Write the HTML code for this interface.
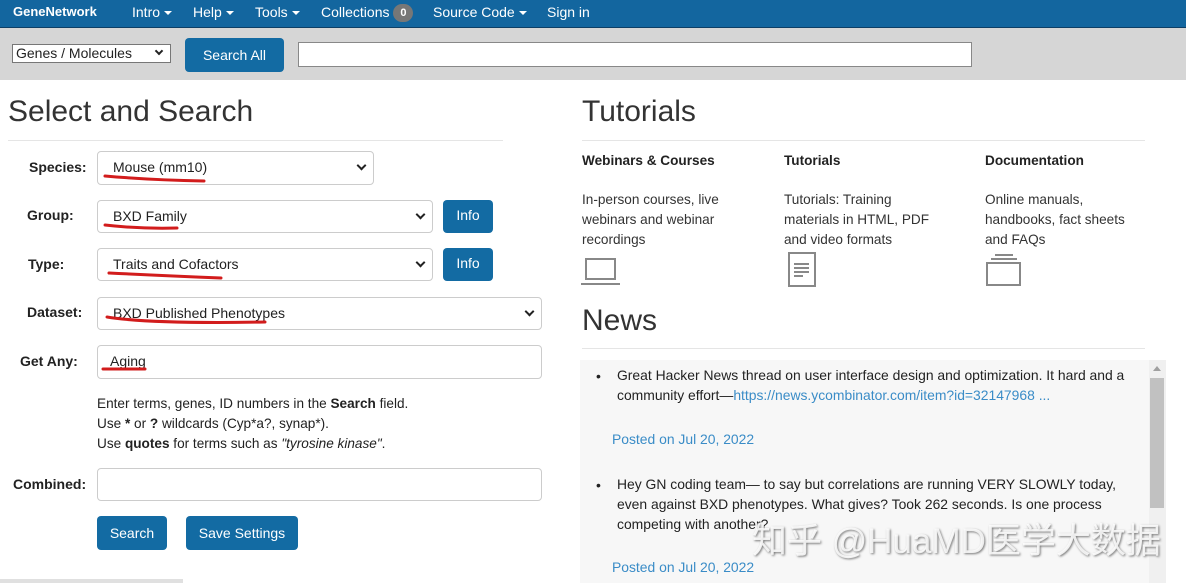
<!DOCTYPE html>
<html><head><meta charset="utf-8"><style>
*{box-sizing:border-box;margin:0;padding:0}
body{width:1186px;height:583px;overflow:hidden;background:#fff;font-family:"Liberation Sans",Arial,sans-serif;font-size:14px;color:#222;position:relative}
.a{position:absolute;white-space:nowrap}
#nav{position:absolute;left:0;top:0;width:1186px;height:28px;background:#13669f;border-bottom:1px solid #0d3f66}
#nav span{position:absolute;top:4px;color:#fff;font-size:14px}
.car{display:inline-block;border-top:4px solid #fff;border-left:4px solid transparent;border-right:4px solid transparent;vertical-align:middle;margin-left:4px}
#bar{position:absolute;left:0;top:28px;width:1186px;height:52px;background:#d6d6d6}
.btn{position:absolute;background:#136ba3;color:#fff;border-radius:4px;text-align:center;font-size:14px}
.sel{position:absolute;background:#fff;border:1px solid #ccc;border-radius:4px;font-size:14px}
.sel .t{position:absolute;left:15px;top:7px}
.chev{position:absolute;right:8px;top:10px;width:7px;height:7px;border-right:2px solid #222;border-bottom:2px solid #222;transform:rotate(45deg)}
.lbl{position:absolute;font-weight:bold;font-size:14px}
.h{position:absolute;font-size:30px;color:#333}
.b{font-weight:bold}
.blue{color:#3a8cc7}
</style></head><body>
<div id="nav">
<span style="left:13px;font-weight:bold;font-size:13px">GeneNetwork</span>
<span style="left:132px">Intro<i class="car"></i></span>
<span style="left:193px">Help<i class="car"></i></span>
<span style="left:255px">Tools<i class="car"></i></span>
<span style="left:321px">Collections <b style="display:inline-block;background:#777;border-radius:9px;width:20px;height:18px;font-size:11px;text-align:center;line-height:18px;vertical-align:middle">0</b></span>
<span style="left:433px">Source Code<i class="car"></i></span>
<span style="left:547px">Sign in</span>
</div>
<div id="bar">
<div class="a" style="left:12px;top:16px;width:159px;height:19px;background:#fff;border:1px solid #777;font-size:14px;padding-left:3px;line-height:17px">Genes / Molecules<i class="chev" style="right:8px;top:3px;width:6px;height:6px"></i></div>
<div class="btn" style="left:185px;top:10px;width:99px;height:34px;line-height:34px">Search All</div>
<div class="a" style="left:298px;top:14px;width:674px;height:25px;background:#fff;border:1px solid #888"></div>
</div>

<div class="h" style="left:8px;top:95px">Select and Search</div>
<div class="a" style="left:8px;top:140px;width:495px;height:1px;background:#e5e5e5"></div>

<div class="lbl" style="left:29px;top:159px">Species:</div>
<div class="sel" style="left:97px;top:151px;width:277px;height:34px"><span class="t">Mouse (mm10)</span><i class="chev"></i></div>
<div class="lbl" style="left:27px;top:207px">Group:</div>
<div class="sel" style="left:97px;top:200px;width:336px;height:33px"><span class="t">BXD Family</span><i class="chev"></i></div>
<div class="btn" style="left:443px;top:200px;width:50px;height:33px;line-height:31px">Info</div>
<div class="lbl" style="left:28px;top:256px">Type:</div>
<div class="sel" style="left:97px;top:248px;width:336px;height:33px"><span class="t">Traits and Cofactors</span><i class="chev"></i></div>
<div class="btn" style="left:443px;top:248px;width:50px;height:33px;line-height:31px">Info</div>
<div class="lbl" style="left:27px;top:304px">Dataset:</div>
<div class="sel" style="left:97px;top:297px;width:445px;height:33px"><span class="t">BXD Published Phenotypes</span><i class="chev"></i></div>
<div class="lbl" style="left:20px;top:353px">Get Any:</div>
<div class="sel" style="left:97px;top:345px;width:445px;height:34px"><span class="t" style="left:12px">Aging</span></div>
<div class="a" style="left:97px;top:394px;line-height:20px;font-size:13.6px">Enter terms, genes, ID numbers in the <b>Search</b> field.<br>Use <b>*</b> or <b>?</b> wildcards (Cyp*a?, synap*).<br>Use <b>quotes</b> for terms such as <i>"tyrosine kinase"</i>.</div>
<div class="lbl" style="left:13px;top:476px">Combined:</div>
<div class="sel" style="left:97px;top:468px;width:445px;height:33px"></div>
<div class="btn" style="left:97px;top:516px;width:70px;height:34px;line-height:34px">Search</div>
<div class="btn" style="left:186px;top:516px;width:112px;height:34px;line-height:34px">Save Settings</div>

<svg class="a" style="left:0;top:0" width="560" height="583">
<g stroke="#d21c1c" stroke-width="3" fill="none" stroke-linecap="round">
<path d="M105 176 Q150 180 204 181"/>
<path d="M105 225 Q140 229 177 228"/>
<path d="M109 273 Q170 276 221 278"/>
<path d="M107 317 Q150 324 265 322"/>
<path d="M103 369 L145 369"/>
</g></svg>

<div class="h" style="left:582px;top:95px">Tutorials</div>
<div class="a" style="left:582px;top:140px;width:563px;height:1px;background:#e5e5e5"></div>
<div class="a b" style="left:582px;top:153px;font-size:13.6px">Webinars &amp; Courses</div>
<div class="a b" style="left:784px;top:153px;font-size:13.6px">Tutorials</div>
<div class="a b" style="left:985px;top:153px;font-size:13.6px">Documentation</div>
<div class="a" style="left:582px;top:190px;line-height:20px;color:#333;font-size:13.6px">In-person courses, live<br>webinars and webinar<br>recordings</div>
<div class="a" style="left:784px;top:190px;line-height:20px;color:#333;font-size:13.6px">Tutorials: Training<br>materials in HTML, PDF<br>and video formats</div>
<div class="a" style="left:985px;top:190px;line-height:20px;color:#333;font-size:13.6px">Online manuals,<br>handbooks, fact sheets<br>and FAQs</div>
<svg class="a" style="left:580px;top:250px" width="460" height="40" fill="none" stroke="#888" stroke-width="2">
<rect x="6" y="9" width="29" height="20"/><line x1="1" y1="34" x2="40" y2="34"/>
<rect x="209" y="3" width="26" height="33"/><path d="M214 14h15M214 18h15M214 22h15M214 26h9"/>
<rect x="407" y="13" width="33" height="22"/><path d="M411 9h26M415 5h18"/>
</svg>

<div class="h" style="left:582px;top:304px">News</div>
<div class="a" style="left:582px;top:348px;width:563px;height:1px;background:#e5e5e5"></div>
<div class="a" style="left:580px;top:360px;width:586px;height:223px;background:#f7f7f7"></div>
<div class="a" style="left:1149px;top:360px;width:17px;height:223px;background:#f0f0f0"></div>
<div class="a" style="left:1150px;top:378px;width:14px;height:130px;background:#c1c1c1"></div>
<div class="a" style="left:1153px;top:366px;border-bottom:5px solid #a0a0a0;border-left:4px solid transparent;border-right:4px solid transparent"></div>
<div class="a" style="left:596px;top:366px;line-height:20px;color:#222">•</div>
<div class="a" style="left:617px;top:365px;line-height:20px;color:#222;font-size:13.9px">Great Hacker News thread on user interface design and optimization. It hard and a<br>community effort—<span class="blue">https://news.ycombinator.com/item?id=32147968 ...</span></div>
<div class="a blue" style="left:612px;top:431px;font-size:13.9px">Posted on Jul 20, 2022</div>
<div class="a" style="left:596px;top:475px;line-height:20px;color:#222">•</div>
<div class="a" style="left:617px;top:474px;line-height:20px;color:#222;font-size:13.9px">Hey GN coding team— to say but correlations are running VERY SLOWLY today,<br>even against BXD phenotypes. What gives? Took 262 seconds. Is one process<br>competing with another?</div>
<div class="a blue" style="left:612px;top:559px;font-size:13.9px">Posted on Jul 20, 2022</div>
<div class="a" style="left:752px;top:513px;font-size:35px;color:rgba(255,255,255,0.85);text-shadow:1px 1px 2px #777;font-family:'Liberation Sans','Noto Sans CJK SC',sans-serif">知乎 @HuaMD医学大数据</div>
<div class="a" style="left:0;top:579px;width:183px;height:4px;background:#e0e0e0"></div>
</body></html>
